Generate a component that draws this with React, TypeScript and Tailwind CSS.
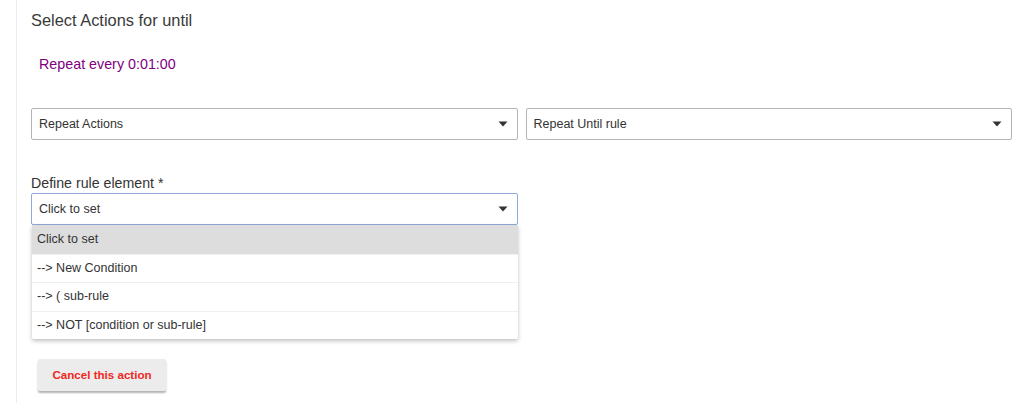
import React from "react";

const Caret = () => (
  <svg width="10" height="6" viewBox="0 0 10 6" className="shrink-0">
    <path d="M0.5 0.5 L9.5 0.5 L5 5.5 Z" fill="#333" />
  </svg>
);

function Select({ label, focused = false }: { label: string; focused?: boolean }) {
  return (
    <div
      className={`flex h-[32px] items-center justify-between rounded-[2px] border bg-white pl-[7px] pr-[9px] text-[12.5px] text-[#333] ${
        focused ? "border-[#8fa9d9]" : "border-[#b4b4b4]"
      }`}
    >
      <span>{label}</span>
      <Caret />
    </div>
  );
}

const options = ["Click to set", "--> New Condition", "--> ( sub-rule", "--> NOT [condition or sub-rule]"];

export default function App() {
  return (
    <div
      className="flex h-[403px] w-[1035px] bg-white"
      style={{ fontFamily: "'Liberation Sans', Arial, sans-serif" }}
    >
      <div className="w-[17px] shrink-0 border-r border-[#ececec]" />
      <div className="flex w-[981px] flex-col ml-[14px]">
        <div className="pt-[10px] text-[16.4px] leading-[20px] text-[#3a3a3a]">Select Actions for until</div>
        <div className="pl-[8px] pt-[25px] text-[14.3px] leading-[18px] text-[#800080]">Repeat every 0:01:00</div>
        <div className="mt-[35px] grid grid-cols-2 gap-[8px]">
          <Select label="Repeat Actions" />
          <Select label="Repeat Until rule" />
        </div>
        <div className="w-[487px]">
          <div className="mt-[34px] text-[14.2px] leading-[18px] text-[#333]">Define rule element *</div>
          <div className="mt-[1px]">
            <Select label="Click to set" focused />
          </div>
          <div className="ml-[1px] rounded-b-[2px] bg-white shadow-[0_2px_4px_rgba(0,0,0,0.25)]">
            {options.map((o, i) => (
              <div
                key={o}
                className={`flex h-[28.5px] items-center px-[5px] text-[12.5px] text-[#333] ${
                  i === 0 ? "bg-[#dddddd]" : "border-t border-[#f0f0f0]"
                }`}
              >
                {o}
              </div>
            ))}
          </div>
          <button className="ml-[7px] mt-[20px] h-[32px] w-[128px] rounded-[2px] bg-[#ececec] text-[11.6px] font-bold text-[#f0281e] shadow-[0_2px_2px_rgba(0,0,0,0.3)]">
            Cancel this action
          </button>
        </div>
      </div>
    </div>
  );
}
